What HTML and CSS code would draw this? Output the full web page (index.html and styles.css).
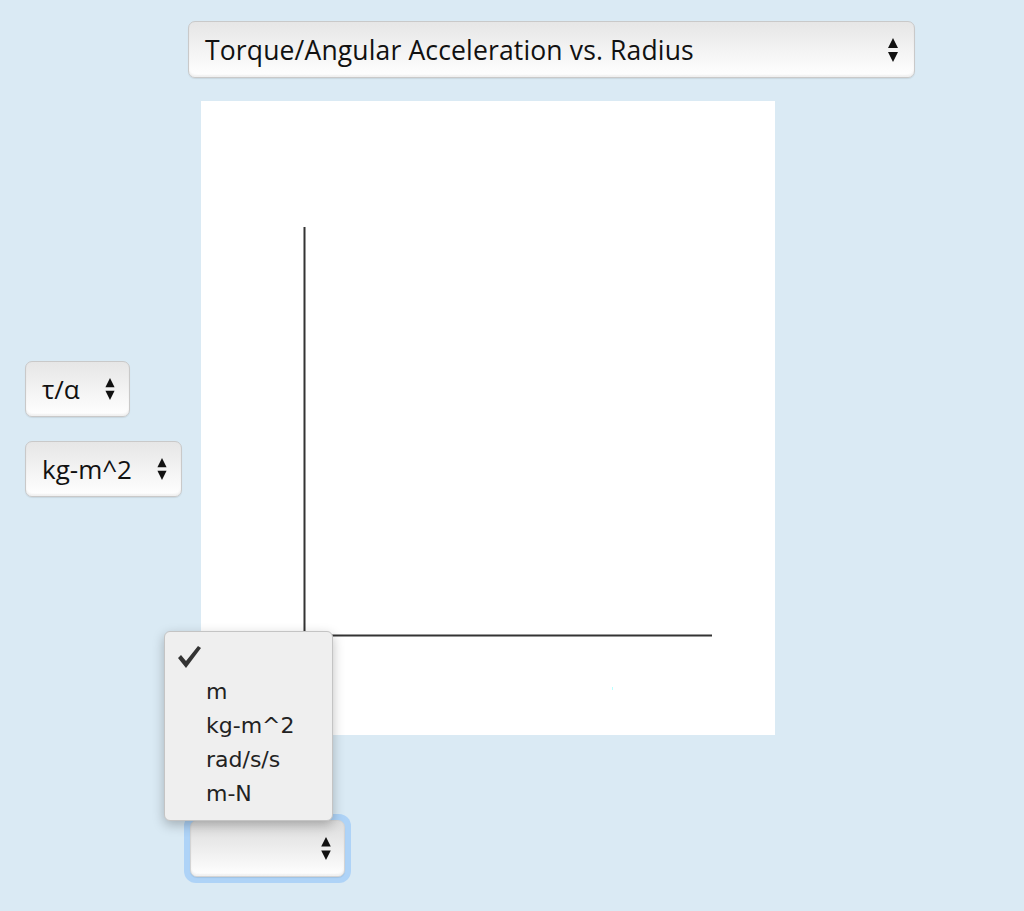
FILE: index.html
```html
<!DOCTYPE html>
<html lang="en">
<head>
<meta charset="utf-8">
<title>Graph</title>
<link rel="stylesheet" href="styles.css">
</head>
<body>
	<div id="page">
		<div class="picker picker-title">
			<span class="picker-value">Torque/Angular Acceleration vs. Radius</span>
			<svg class="arrows" width="10" height="24" viewBox="0 0 10 24"><path d="M5 0 L10 10 L0 10 Z M0 14 L10 14 L5 24 Z" fill="#111"/></svg>
		</div>

		<div class="graph-row">
			<div class="y-controls">
				<div class="picker picker-small">
					<span class="picker-value">τ/α</span>
					<svg class="arrows" width="12" height="22" viewBox="0 0 10 24"><path d="M5 0 L10 10 L0 10 Z M0 14 L10 14 L5 24 Z" fill="#111"/></svg>
				</div>
				<div class="picker picker-small">
					<span class="picker-value">kg-m^2</span>
					<svg class="arrows" width="12" height="22" viewBox="0 0 10 24"><path d="M5 0 L10 10 L0 10 Z M0 14 L10 14 L5 24 Z" fill="#111"/></svg>
				</div>
			</div>
			<div class="plot">
				<svg width="574" height="634" viewBox="0 0 574 634">
					<line x1="103.5" y1="126" x2="103.5" y2="535" stroke="#333" stroke-width="2"/>
					<line x1="103" y1="534.5" x2="511" y2="534.5" stroke="#333" stroke-width="2"/>
					<rect x="411" y="586" width="1" height="3" fill="#bff"/>
				</svg>
			</div>
		</div>

		<div class="x-controls">
			<div class="focus-ring">
				<div class="picker picker-empty">
					<span class="picker-value"></span>
					<svg class="arrows" width="12" height="23" viewBox="0 0 10 24"><path d="M5 0 L10 10 L0 10 Z M0 14 L10 14 L5 24 Z" fill="#111"/></svg>
				</div>
			</div>
			<ul class="menu">
				<li class="checked">
					<svg width="26" height="24" viewBox="0 0 26 24"><path d="M2 13 L5 10 L10 16 L22 1 L25 3 L10 23 Z" fill="#333"/></svg>
				</li>
				<li>m</li>
				<li>kg-m^2</li>
				<li>rad/s/s</li>
				<li>m-N</li>
			</ul>
		</div>
	</div>
</body>
</html>
```

FILE: styles.css
```css
html, body {
	margin: 0;
	background: #daeaf4;
}

#page {
	width: 1024px;
	height: 911px;
	padding-top: 21px;
	box-sizing: border-box;
	font-family: "Open Sans", sans-serif;
}

.picker {
	display: flex;
	align-items: center;
	justify-content: space-between;
	box-sizing: border-box;
	border: 1px solid #c9c9c9;
	border-radius: 7px;
	background: linear-gradient(#e6e6e6, #f4f4f4 55%, #ffffff);
	box-shadow: inset 0 -2px 2px rgba(0,0,0,0.06), 0 1px 1px rgba(0,0,0,0.08);
	color: #111;
}

.picker-title {
	margin-left: 188px;
	width: 727px;
	height: 57px;
	padding: 0 16px 0 16px;
	font-size: 26.5px;
	letter-spacing: 0.15px;
}

.graph-row {
	display: flex;
	margin-top: 23px;
}

.y-controls {
	width: 176px;
	padding: 260px 0 0 25px;
	display: flex;
	flex-direction: column;
	align-items: flex-start;
	gap: 24px;
}

.picker-small {
	height: 56px;
	padding: 0 13px 0 16px;
	font-size: 26px;
	gap: 24px;
}

.plot {
	width: 574px;
	height: 634px;
	background: #fff;
}

.plot svg {
	display: block;
}

.x-controls {
	position: relative;
	margin: 79px 0 0 184px;
	width: 167px;
}

.focus-ring {
	padding: 6px;
	border-radius: 12px;
	background: #aed3f7;
}

.picker-empty {
	height: 57px;
	padding: 0 12px;
	border-color: #d4d4d4;
	background: linear-gradient(#dcdcdc, #efefef 55%, #ffffff);
}

.picker-empty .picker-value {
	flex: 1;
}

.menu {
	position: absolute;
	left: -20px;
	top: -183px;
	width: 169px;
	height: 190px;
	box-sizing: border-box;
	margin: 0;
	padding: 13px 0 0 41px;
	list-style: none;
	background: #efefef;
	border: 1px solid #c4c4c4;
	border-radius: 6px;
	box-shadow: 0 4px 12px rgba(0,0,0,0.25);
	font-family: "DejaVu Sans", Verdana, sans-serif;
	font-size: 22px;
	color: #222;
}

.menu li {
	height: 34px;
	line-height: 34px;
}

.menu li.checked {
	height: 30px;
	line-height: 0;
	margin-left: -30px;
}
```
